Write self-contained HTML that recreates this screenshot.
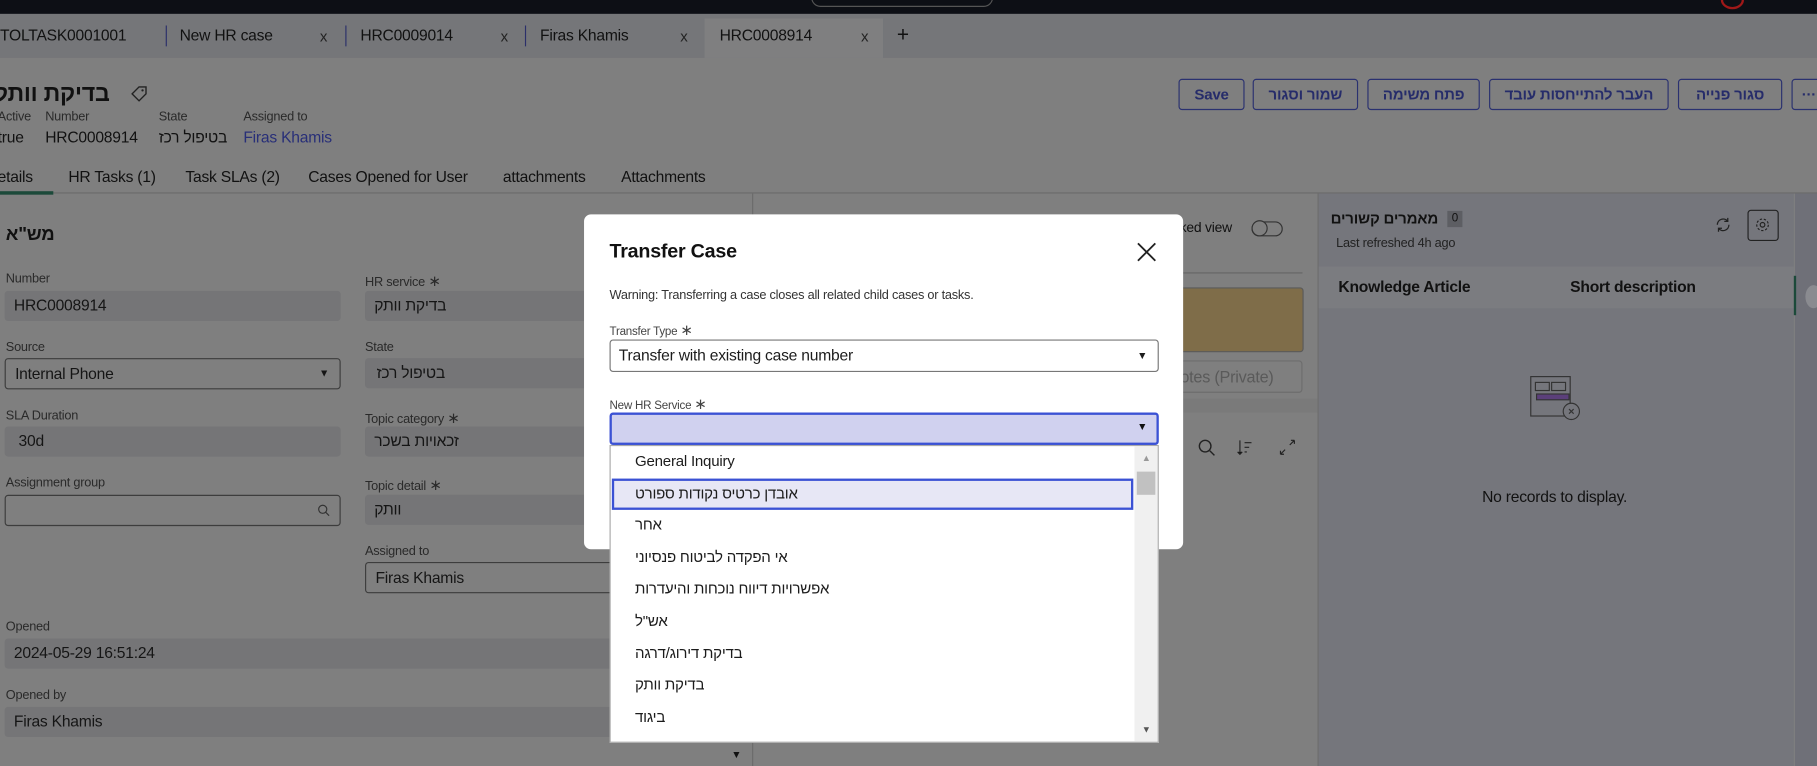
<!DOCTYPE html>
<html><head><meta charset="utf-8">
<style>
html,body{margin:0;padding:0;width:1817px;height:766px;overflow:hidden;background:#7f7f7f;}
#w{position:absolute;left:0;top:0;width:1568px;height:661px;transform:scale(1.15880);transform-origin:0 0;font-family:"Liberation Sans","Noto Sans CJK SC",sans-serif;color:#111;overflow:hidden;background:#7f7f7f;letter-spacing:-0.2px}
.a{position:absolute;white-space:nowrap}
.lbl{font-size:11px;color:#2a2a2a}
.inp{position:absolute;height:26px;background:#757577;border-radius:3px;font-size:13.5px;line-height:26px;padding-left:8px;box-sizing:border-box;color:#151515}
.inpb{position:absolute;height:27px;border:1px solid #3d3d3d;border-radius:3px;font-size:13.5px;line-height:25px;padding-left:8px;box-sizing:border-box;color:#151515}
.btn{position:absolute;top:68px;height:27px;border:1px solid #2a3170;border-radius:3px;font-size:13px;font-weight:bold;color:#262c6a;line-height:25px;text-align:center;box-sizing:border-box}
.tab{position:absolute;top:23px;font-size:13.5px;color:#111}
.x{position:absolute;top:24px;font-size:13px;color:#222}
.sep{position:absolute;top:22px;width:1px;height:18px;background:#2b2f6a}
.star{font-size:13px}
.it{position:absolute;left:548px;font-size:13px;color:#1c1c1c;direction:rtl;text-align:left}
</style></head><body><div id="w">
<div class="a" style="left:0;top:0;width:1568px;height:12px;background:#0d0f15"></div>
<div class="a" style="left:700px;top:-10px;width:155px;height:14px;border:1px solid #555;border-radius:8px"></div>
<div class="a" style="left:1485px;top:-8px;width:16px;height:12px;border:2px solid #a01818;border-radius:50%"></div>
<div class="a" style="left:0;top:12px;width:1568px;height:38px;background:#757679"></div>
<div class="a" style="left:608px;top:16px;width:154px;height:34px;background:#7f7f80"></div>
<div class="tab" style="left:0">TOLTASK0001001</div>
<div class="sep" style="left:143px"></div>
<div class="tab" style="left:155px">New HR case</div><div class="x" style="left:276px">x</div>
<div class="sep" style="left:298px"></div>
<div class="tab" style="left:311px">HRC0009014</div><div class="x" style="left:432px">x</div>
<div class="sep" style="left:453px"></div>
<div class="tab" style="left:466px">Firas Khamis</div><div class="x" style="left:587px">x</div>
<div class="tab" style="left:621px">HRC0008914</div><div class="x" style="left:743px">x</div>
<div class="a" style="left:774px;top:20px;font-size:18px;color:#111">+</div>
<div class="a" style="left:-6px;top:70px;font-size:20px;font-weight:bold;direction:rtl">בדיקת וותק</div>
<svg class="a" style="left:113px;top:74px" width="14" height="14" viewBox="0 0 14 14"><path d="M7 1 L13 1 L13 7 L7 13 L1 7 Z" fill="none" stroke="#222" stroke-width="1.2"/><circle cx="10" cy="4" r="1" fill="#222"/></svg>
<div class="a lbl" style="left:-2px;top:95px">Active</div>
<div class="a lbl" style="left:39px;top:95px">Number</div>
<div class="a lbl" style="left:137px;top:95px">State</div>
<div class="a lbl" style="left:210px;top:95px">Assigned to</div>
<div class="a" style="left:-2px;top:111px;font-size:13.5px">true</div>
<div class="a" style="left:39px;top:111px;font-size:13.5px">HRC0008914</div>
<div class="a" style="left:137px;top:111px;font-size:13.5px;direction:rtl;width:64px;text-align:left">בטיפול רכז</div>
<div class="a" style="left:210px;top:111px;font-size:13.5px;color:#282f78">Firas Khamis</div>
<div class="btn" style="left:1017px;width:57px">Save</div>
<div class="btn" style="left:1081px;width:91px">שמור וסגור</div>
<div class="btn" style="left:1180px;width:97px">פתח משימה</div>
<div class="btn" style="left:1285px;width:155px">העבר להתייחסות עובד</div>
<div class="btn" style="left:1448px;width:90px">סגור פנייה</div>
<div class="btn" style="left:1546px;width:30px">···</div>
<div class="a" style="left:-2px;top:145px;font-size:13.5px">etails</div>
<div class="a" style="left:59px;top:145px;font-size:13.5px">HR Tasks (1)</div>
<div class="a" style="left:160px;top:145px;font-size:13.5px">Task SLAs (2)</div>
<div class="a" style="left:266px;top:145px;font-size:13.5px">Cases Opened for User</div>
<div class="a" style="left:434px;top:145px;font-size:13.5px">attachments</div>
<div class="a" style="left:536px;top:145px;font-size:13.5px">Attachments</div>
<div class="a" style="left:0;top:166px;width:1568px;height:1px;background:#6b6b6b"></div>
<div class="a" style="left:0;top:165px;width:46px;height:3px;background:#1c4a3a"></div>
<div class="a" style="left:649px;top:167px;width:1px;height:494px;background:#6b6b6b"></div>
<div class="a" style="left:5px;top:194px;font-size:16px;font-weight:bold">מש"א</div>
<div class="a lbl" style="left:5px;top:235px">Number</div>
<div class="inp" style="left:4px;top:251px;width:290px">HRC0008914</div>
<div class="a lbl" style="left:5px;top:294px">Source</div>
<div class="inpb" style="left:4px;top:309px;width:290px">Internal Phone<span style="position:absolute;right:9px;font-size:9px">▼</span></div>
<div class="a lbl" style="left:5px;top:353px">SLA Duration</div>
<div class="inp" style="left:4px;top:368px;width:290px;padding-left:12px">30d</div>
<div class="a lbl" style="left:5px;top:411px">Assignment group</div>
<div class="inpb" style="left:4px;top:427px;width:290px"><svg style="position:absolute;right:8px;top:7px" width="11" height="11"><circle cx="4.5" cy="4.5" r="3.5" fill="none" stroke="#333"/><path d="M7 7 L10 10" stroke="#333"/></svg></div>
<div class="a lbl" style="left:315px;top:235px">HR service <span class="star">∗</span></div>
<div class="inp" style="left:315px;top:251px;width:200px;direction:rtl;text-align:left">בדיקת וותק</div>
<div class="a lbl" style="left:315px;top:294px">State</div>
<div class="inp" style="left:315px;top:309px;width:200px;padding-left:10px">בטיפול רכז</div>
<div class="a lbl" style="left:315px;top:353px">Topic category <span class="star">∗</span></div>
<div class="inp" style="left:315px;top:368px;width:200px">זכאויות בשכר</div>
<div class="a lbl" style="left:315px;top:411px">Topic detail <span class="star">∗</span></div>
<div class="inp" style="left:315px;top:427px;width:200px">וותק</div>
<div class="a lbl" style="left:315px;top:470px">Assigned to</div>
<div class="inpb" style="left:315px;top:485px;width:220px">Firas Khamis</div>
<div class="a lbl" style="left:5px;top:535px">Opened</div>
<div class="inp" style="left:4px;top:551px;width:530px">2024-05-29 16:51:24</div>
<div class="a lbl" style="left:5px;top:594px">Opened by</div>
<div class="inp" style="left:4px;top:610px;width:530px">Firas Khamis</div>
<div class="a" style="left:631px;top:646px;font-size:9px">▼</div>
<div class="a" style="left:1018px;top:189px;font-size:12px">ked view</div>
<div class="a" style="left:1080px;top:191px;width:25px;height:11px;border:1px solid #333;border-radius:7px"></div>
<div class="a" style="left:1080px;top:190px;width:12px;height:12px;border:1px solid #333;border-radius:50%;background:#7f7f7f"></div>
<div class="a" style="left:1000px;top:235px;width:124px;height:1px;background:#666"></div>
<div class="a" style="left:1010px;top:248px;width:113px;height:54px;background:#7f6d49;border:1px solid #5a5a5a;border-radius:3px"></div>
<div class="a" style="left:1010px;top:311px;width:112px;height:26px;border:1px solid #6d6d6d;border-radius:3px;font-size:14px;color:#5a5a5a;line-height:26px">notes (Private)</div>
<div class="a" style="left:1000px;top:344px;width:137px;height:12px;background:#7a7a7a"></div>
<svg class="a" style="left:1033px;top:378px" width="90" height="16"><circle cx="7" cy="7" r="5" fill="none" stroke="#222" stroke-width="1.2"/><path d="M11 11 L15 15" stroke="#222" stroke-width="1.2"/><path d="M37 2 V14 M35 12 L37 14 L39 12 M41 4 H47 M41 8 H45 M41 12 H43" stroke="#222" stroke-width="1"/><path d="M72 14 L76 10 M72 14 V11 M72 14 H75 M84 2 L80 6 M84 2 V5 M84 2 H81" stroke="#222" stroke-width="1"/></svg>
<div class="a" style="left:1137px;top:167px;width:1px;height:494px;background:#6b6b6b"></div>
<div class="a" style="left:1138px;top:167px;width:410px;height:494px;background:#75767c"></div>
<div class="a" style="left:1153px;top:181px;font-size:13px;font-weight:bold;direction:rtl;width:88px;text-align:left">מאמרים קשורים</div>
<div class="a" style="left:1249px;top:182px;width:13px;height:14px;background:#5d5e63;font-size:10px;text-align:center;line-height:14px">0</div>
<div class="a" style="left:1153px;top:204px;font-size:11px;color:#222">Last refreshed 4h ago</div>
<svg class="a" style="left:1480px;top:187px" width="14" height="14"><path d="M2 7 A5 5 0 0 1 11 4 M12 7 A5 5 0 0 1 3 10 M11 1 V4 H8 M3 13 V10 H6" fill="none" stroke="#222" stroke-width="1.1"/></svg>
<div class="a" style="left:1508px;top:181px;width:25px;height:25px;border:1px solid #222;border-radius:3px"></div>
<svg class="a" style="left:1514px;top:187px" width="14" height="14"><circle cx="7" cy="7" r="2" fill="none" stroke="#222"/><circle cx="7" cy="7" r="5" fill="none" stroke="#222" stroke-dasharray="2 1.5"/></svg>
<div class="a" style="left:1138px;top:230px;width:410px;height:36px;background:#7b7c80"></div>
<div class="a" style="left:1155px;top:240px;font-size:13.5px;font-weight:bold">Knowledge Article</div>
<div class="a" style="left:1355px;top:240px;font-size:13.5px;font-weight:bold">Short description</div>
<svg class="a" style="left:1320px;top:324px" width="50" height="40"><rect x="1" y="1" width="34" height="34" fill="none" stroke="#333"/><rect x="5" y="6" width="12" height="7" fill="none" stroke="#333"/><rect x="19" y="6" width="12" height="7" fill="none" stroke="#333"/><rect x="6" y="16" width="28" height="5" fill="#5b3f7a" stroke="#333"/><circle cx="36" cy="31" r="7" fill="#75767c" stroke="#333"/><path d="M34 29 L38 33 M38 29 L34 33" stroke="#333"/></svg>
<div class="a" style="left:1279px;top:421px;font-size:13.5px">No records to display.</div>
<div class="a" style="left:1549px;top:167px;width:19px;height:494px;background:#6f7078"></div>
<div class="a" style="left:1548px;top:238px;width:2px;height:34px;background:#1c4a3a"></div>
<div class="a" style="left:1558px;top:246px;width:14px;height:20px;border-radius:50%;background:#8a8b90"></div>
<div class="a" style="left:504px;top:185px;width:517px;height:289px;background:#fff;border-radius:6px"></div>
<div class="a" style="left:526px;top:207px;font-size:17px;font-weight:bold;color:#111">Transfer Case</div>
<svg class="a" style="left:981px;top:209px" width="17" height="17"><path d="M1 1 L16 16 M16 1 L1 16" stroke="#222" stroke-width="1.6"/></svg>
<div class="a" style="left:526px;top:249px;font-size:11px;color:#333">Warning: Transferring a case closes all related child cases or tasks.</div>
<div class="a" style="left:526px;top:277px;font-size:10px;color:#444">Transfer Type <span class="star">∗</span></div>
<div class="a" style="left:526px;top:293px;width:474px;height:28px;border:1px solid #777;border-radius:3px;box-sizing:border-box;font-size:13.5px;line-height:26px;padding-left:7px;color:#1c1c1c">Transfer with existing case number<span style="position:absolute;right:9px;font-size:9px">▼</span></div>
<div class="a" style="left:526px;top:341px;font-size:10px;color:#444">New HR Service <span class="star">∗</span></div>
<div class="a" style="left:526px;top:356px;width:474px;height:28px;border:2px solid #3b52d4;border-radius:3px;box-sizing:border-box;background:#d0d1ef"><span style="position:absolute;right:8px;top:5px;font-size:9px">▼</span></div>
<div class="a" style="left:526px;top:384px;width:474px;height:257px;background:#fff;border:1px solid #aaa;box-sizing:border-box;overflow:hidden">
<div class="a" style="right:0;top:0;width:20px;height:257px;background:#f0f0f0"></div>
<div class="a" style="right:2px;top:22px;width:16px;height:20px;background:#c1c1c1"></div>
<div class="a" style="right:6px;top:6px;font-size:8px;color:#999">▲</div>
<div class="a" style="right:6px;top:240px;font-size:8px;color:#555">▼</div>
<div class="a" style="left:1px;top:28px;width:450px;height:27px;background:#e7e7f5;border:2px solid #3b52d4;box-sizing:border-box"></div>
</div>
<div class="it" style="top:390px;direction:ltr">General Inquiry</div>
<div class="it" style="top:418px">אובדן כרטיס נקודות ספורט</div>
<div class="it" style="top:445px">אחר</div>
<div class="it" style="top:473px">אי הפקדה לביטוח פנסיוני</div>
<div class="it" style="top:500px">אפשרויות דיווח נוכחות והיעדרות</div>
<div class="it" style="top:528px">אש"ל</div>
<div class="it" style="top:556px">בדיקת דירוג/דרגה</div>
<div class="it" style="top:583px">בדיקת וותק</div>
<div class="it" style="top:611px">ביגוד</div>
</div></body></html>
